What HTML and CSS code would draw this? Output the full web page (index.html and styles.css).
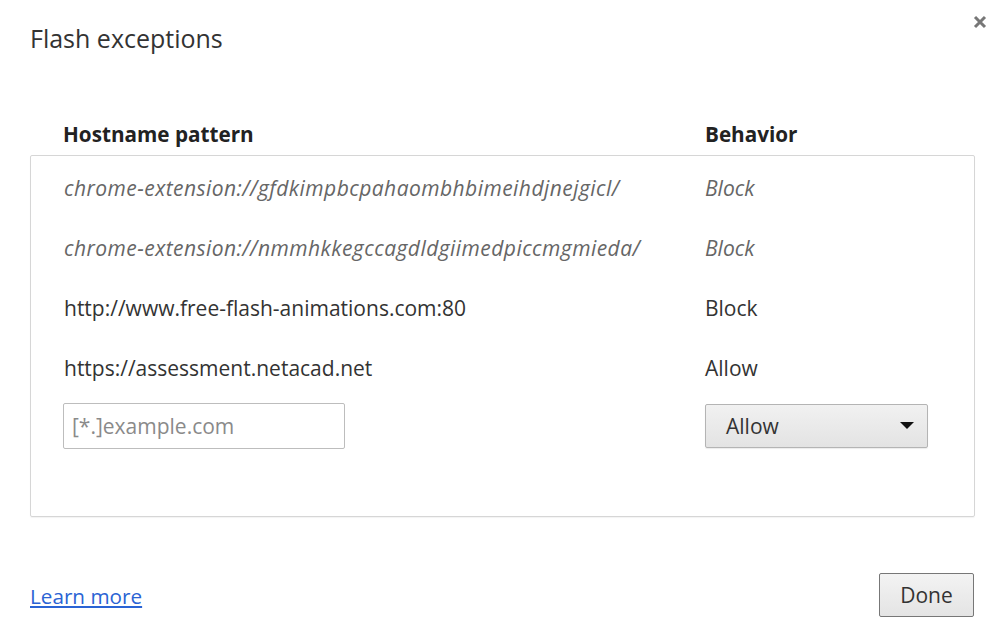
FILE: index.html
```html
<!DOCTYPE html>
<html lang="en">
<head>
    <meta charset="UTF-8">
    <title>Flash exceptions</title>
    <link rel="stylesheet" href="styles.css">
</head>
<body>
    <div class="dialog">
        <div class="dialog-head">
            <h1>Flash exceptions</h1>
            <span class="close">
                <svg width="16" height="16" viewBox="0 0 16 16"><path d="M3 3L13 13M13 3L3 13" stroke="#777" stroke-width="3"/></svg>
            </span>
        </div>

        <div class="columns">
            <div class="col-host">Hostname pattern</div>
            <div class="col-behavior">Behavior</div>
        </div>

        <div class="list">
            <div class="row ext">
                <div class="col-host">chrome-extension://gfdkimpbcpahaombhbimeihdjnejgicl/</div>
                <div class="col-behavior">Block</div>
            </div>
            <div class="row ext">
                <div class="col-host">chrome-extension://nmmhkkegccagdldgiimedpiccmgmieda/</div>
                <div class="col-behavior">Block</div>
            </div>
            <div class="row">
                <div class="col-host">http://www.free-flash-animations.com:80</div>
                <div class="col-behavior">Block</div>
            </div>
            <div class="row">
                <div class="col-host">https://assessment.netacad.net</div>
                <div class="col-behavior">Allow</div>
            </div>
            <div class="row new">
                <div class="col-host"><input type="text" placeholder="[*.]example.com"></div>
                <div class="col-behavior">
                    <div class="select">
                        <span>Allow</span>
                        <svg width="14" height="8" viewBox="0 0 14 8"><path d="M0 0H14L7 7Z" fill="#111"/></svg>
                    </div>
                </div>
            </div>
        </div>

        <div class="dialog-foot">
            <a href="#">Learn more</a>
            <button type="button">Done</button>
        </div>
    </div>
</body>
</html>
```

FILE: styles.css
```css
body {
    margin: 0;
    background-color: #ffffff;
    font-family: "Open Sans", "Noto Sans", sans-serif;
    color: #333333;
}

.dialog {
    width: 1000px;
    height: 639px;
    box-sizing: border-box;
    padding: 0 25px 0 30px;
    display: flex;
    flex-direction: column;
}

.dialog-head {
    display: flex;
    justify-content: space-between;
    height: 78px;
}

h1 {
    margin: 21px 0 0;
    font-size: 25px;
    font-weight: normal;
    color: #333333;
}

.close {
    margin: 13px -13px 0 0;
}

.columns {
    display: flex;
    margin-top: 42px;
    height: 35px;
    font-weight: bold;
    font-size: 20.7px;
    color: #222222;
}

.col-host {
    width: 642px;
    padding-left: 33px;
}

.col-behavior {
    flex: 1;
}

.list {
    border: 1px solid #d6d6d6;
    border-radius: 2px;
    height: 358px;
    box-shadow: 0 1px 1px rgba(0, 0, 0, 0.05);
    padding-top: 2px;
}

.row {
    display: flex;
    align-items: center;
    height: 60px;
    font-size: 21px;
    color: #333333;
}

.row.ext {
    font-style: italic;
    color: #666666;
    letter-spacing: 0.45px;
}

.row.ext .col-behavior {
    letter-spacing: 0;
}

.row .col-behavior {
    margin-left: -1px;
}

.row.new {
    height: 56px;
}

.row.new .col-host {
    padding-left: 32px;
}

input[type="text"] {
    width: 282px;
    height: 46px;
    box-sizing: border-box;
    margin: 0;
    padding: 0 8px;
    border: 1px solid #bdbdbd;
    border-radius: 2px;
    font-family: inherit;
    font-size: 21px;
    color: #333333;
}

input::placeholder {
    color: #8a8a8a;
}

.row.new .col-behavior {
    margin-left: 0;
}

.select {
    width: 223px;
    height: 44px;
    box-sizing: border-box;
    display: flex;
    justify-content: space-between;
    align-items: center;
    padding: 0 13px 0 20px;
    border: 1px solid #b4b4b4;
    border-radius: 2px;
    background: linear-gradient(#f1f1f1, #e3e3e3);
    box-shadow: 0 1px 1px rgba(0, 0, 0, 0.08);
    color: #333333;
}

.dialog-foot {
    display: flex;
    justify-content: space-between;
    align-items: center;
    margin-top: 56px;
}

.dialog-foot a {
    color: #2a63d4;
    font-size: 20.7px;
    margin-top: 1px;
}

button {
    width: 95px;
    height: 44px;
    border: 1px solid #777777;
    border-radius: 2px;
    background: linear-gradient(#f3f3f3, #e4e4e4);
    font-family: inherit;
    font-size: 21px;
    color: #333333;
    margin-right: 1px;
}
```
